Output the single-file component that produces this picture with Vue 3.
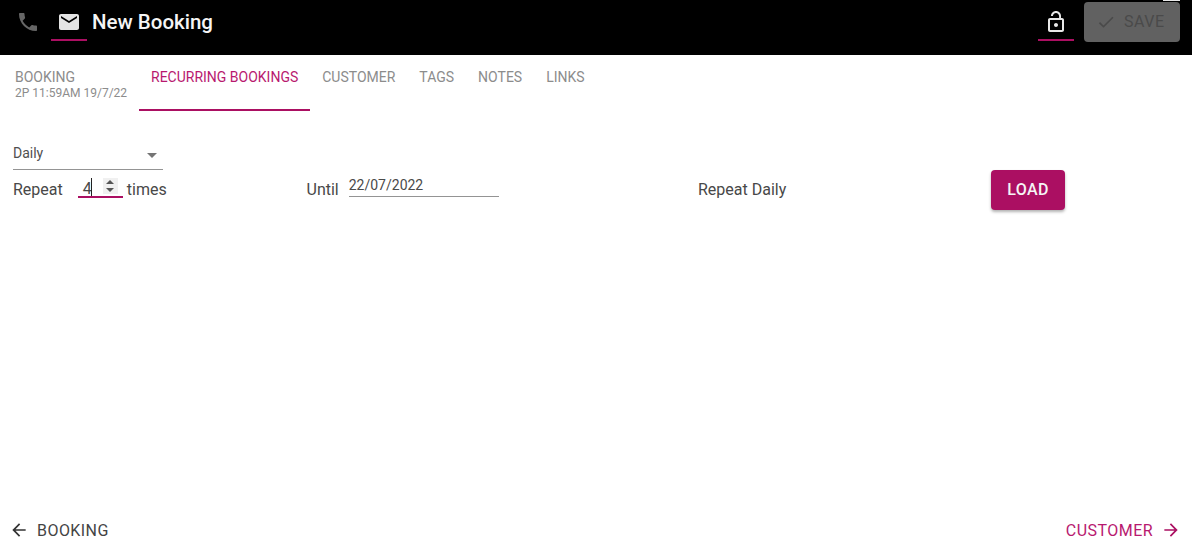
<template>
  <div class="page">
    <header class="bar">
      <div class="bar-icon phone">
        <svg width="24" height="24" viewBox="0 0 24 24"><path fill="#666" d="M6.62 10.79c1.44 2.83 3.76 5.14 6.59 6.59l2.2-2.2c.27-.27.67-.36 1.02-.24 1.12.37 2.33.57 3.57.57.55 0 1 .45 1 1V20c0 .55-.45 1-1 1-9.39 0-17-7.61-17-17 0-.55.45-1 1-1h3.5c.55 0 1 .45 1 1 0 1.25.2 2.45.57 3.57.11.35.03.74-.25 1.02l-2.2 2.2z"/></svg>
      </div>
      <div class="bar-icon mail">
        <svg width="24" height="24" viewBox="0 0 24 24"><path fill="#e4e4e4" d="M20 4H4c-1.1 0-1.99.9-1.99 2L2 18c0 1.1.9 2 2 2h16c1.1 0 2-.9 2-2V6c0-1.1-.9-2-2-2zm0 4l-8 5-8-5V6l8 5 8-5v2z"/></svg>
        <span class="underline"></span>
      </div>
      <h1 class="title">New Booking</h1>
      <div class="spacer"></div>
      <div class="bar-icon lock">
        <svg width="24" height="24" viewBox="0 0 24 24"><path fill="#e8e8e8" d="M12 17c1.1 0 2-.9 2-2s-.9-2-2-2-2 .9-2 2 .9 2 2 2zm6-9h-1V6c0-2.76-2.24-5-5-5S7 3.24 7 6h1.9c0-1.71 1.39-3.1 3.1-3.1 1.71 0 3.1 1.39 3.1 3.1v2H6c-1.1 0-2 .9-2 2v10c0 1.1.9 2 2 2h12c1.1 0 2-.9 2-2V10c0-1.1-.9-2-2-2zm0 12H6V10h12v10z"/></svg>
        <span class="underline"></span>
      </div>
      <button class="save" type="button">
        <svg width="20" height="20" viewBox="0 0 24 24"><path fill="#4a4a4a" d="M9 16.17 4.83 12l-1.42 1.41L9 19 21 7l-1.41-1.41z"/></svg>
        <span>SAVE</span>
      </button>
      <i class="clip"></i>
    </header>

    <nav class="tabs">
      <div class="tab two-line">
        <span>BOOKING</span>
        <small>2P 11:59AM 19/7/22</small>
      </div>
      <div class="tab active"><span>RECURRING BOOKINGS</span></div>
      <div class="tab"><span>CUSTOMER</span></div>
      <div class="tab"><span>TAGS</span></div>
      <div class="tab"><span>NOTES</span></div>
      <div class="tab"><span>LINKS</span></div>
    </nav>

    <main class="content">
      <div class="select">
        <span>Daily</span>
        <i class="caret"></i>
      </div>
      <div class="row">
        <div class="repeat">
          <span>Repeat</span>
          <div class="number">
            <span class="digit">4</span>
            <i class="cursor"></i>
            <div class="spin">
              <i class="up"></i>
              <i class="down"></i>
            </div>
          </div>
          <span>times</span>
        </div>
        <div class="until">
          <span>Until</span>
          <div class="date">22/07/2022</div>
        </div>
        <div class="freq">Repeat Daily</div>
        <button class="load" type="button">LOAD</button>
      </div>
    </main>

    <footer class="foot">
      <div class="nav back">
        <svg width="20" height="20" viewBox="0 0 24 24"><path fill="#333" d="M20 11H7.83l5.59-5.59L12 4l-8 8 8 8 1.41-1.41L7.83 13H20v-2z"/></svg>
        <span>BOOKING</span>
      </div>
      <div class="nav next">
        <span>CUSTOMER</span>
        <svg width="20" height="20" viewBox="0 0 24 24"><path fill="#ab0f62" d="m12 4-1.41 1.41L16.17 11H4v2h12.17l-5.58 5.59L12 20l8-8z"/></svg>
      </div>
    </footer>
  </div>
</template>

<script setup>
</script>

<style>
html, body { margin: 0; background: #fff; }
</style>

<style scoped>
.page {
  width: 1192px;
  height: 556px;
  display: flex;
  flex-direction: column;
  overflow: hidden;
  font-family: Roboto, "Liberation Sans", sans-serif;
  color: #444;
}
.bar {
  position: relative;
  height: 55px;
  flex: none;
  background: #000;
  display: flex;
  align-items: flex-start;
  overflow: hidden;
}
.bar-icon {
  position: relative;
  width: 36px;
  height: 41px;
  display: flex;
  justify-content: center;
  padding-top: 10px;
  box-sizing: border-box;
}
.phone { margin-left: 10px; margin-right: 5px; }
.underline {
  position: absolute;
  left: 0;
  right: 0;
  bottom: 0;
  height: 2px;
  background: #ab0f62;
}
.title {
  margin: 9px 0 0 5px;
  font-size: 20.5px;
  line-height: 26px;
  font-weight: 500;
  color: #f5f5f5;
}
.spacer { flex: 1; }
.lock { margin-right: 10px; }
.save {
  width: 96px;
  height: 40px;
  margin: 2px 12px 0 0;
  padding: 0 0 2px 12px;
  border: 0;
  border-radius: 4px;
  background: #616161;
  color: #4a4a4a;
  font: 400 16px Roboto, sans-serif;
  letter-spacing: 0.5px;
  display: flex;
  align-items: center;
  gap: 8px;
}
.save svg { margin-top: 2px; }
.clip {
  position: absolute;
  top: 0;
  right: 12px;
  width: 17px;
  height: 1px;
  background: #e8e8e8;
}
.tabs {
  flex: none;
  height: 56px;
  display: flex;
  padding-left: 3px;
}
.tab {
  padding: 14px 12px 0;
  box-sizing: border-box;
  height: 56px;
  font-size: 14px;
  line-height: 15px;
  color: #8c8c8c;
  white-space: nowrap;
}
.tab > span { position: relative; top: 0.5px; }
.two-line {
  display: flex;
  flex-direction: column;
  width: 136px;
}
.two-line small {
  font-size: 12px;
  line-height: 15px;
  margin-top: 1.5px;
}
.active {
  color: #b8196f;
  border-bottom: 2px solid #ab0f62;
}
.content {
  flex: 1;
  padding: 31px 0 0 13px;
  min-height: 0;
}
.select {
  position: relative;
  width: 150px;
  height: 28px;
  box-sizing: border-box;
  border-bottom: 1px solid #949494;
  font-size: 14px;
  line-height: 16px;
  padding-top: 3px;
  color: #4f4f4f;
}
.caret {
  position: absolute;
  right: 6px;
  top: 11px;
  border-left: 5px solid transparent;
  border-right: 5px solid transparent;
  border-top: 5px solid #757575;
}
.row {
  display: flex;
  align-items: flex-start;
  height: 40px;
  font-size: 16px;
  line-height: 19px;
  color: #484848;
}
.repeat {
  width: 293.5px;
  display: flex;
  padding-top: 10px;
}
.number {
  position: relative;
  box-sizing: border-box;
  width: 45px;
  height: 18px;
  margin: 0 4px 0 15px;
  border-bottom: 2px solid #ab0f62;
}
.digit {
  position: absolute;
  left: 5px;
  top: -1px;
}
.cursor {
  position: absolute;
  left: 13px;
  top: -2px;
  width: 1px;
  height: 18px;
  background: #222;
}
.spin {
  position: absolute;
  left: 25px;
  top: -2px;
  width: 15px;
  height: 16px;
  background: #f0f0f0;
}
.up, .down {
  position: absolute;
  left: 3px;
  border-left: 4px solid transparent;
  border-right: 4px solid transparent;
}
.up { top: 2px; border-bottom: 4px solid #555; }
.down { top: 10px; border-top: 4px solid #555; }
.until {
  width: 391.5px;
  display: flex;
  padding-top: 10px;
}
.date {
  width: 150px;
  height: 18px;
  margin: -2px 0 0 10px;
  border-bottom: 1px solid #949494;
  font-size: 14px;
  line-height: 15px;
  color: #4a4a4a;
}
.freq {
  width: 293px;
  padding-top: 10px;
}
.load {
  width: 74px;
  height: 40px;
  border: 0;
  border-radius: 4px;
  background: #ab0f62;
  color: #f5f5f5;
  font: 500 16px Roboto, sans-serif;
  letter-spacing: 0.4px;
  box-shadow: 0 2px 3px rgba(0, 0, 0, 0.3);
  padding: 0 0 2px;
}
.foot {
  flex: none;
  height: 50px;
  display: flex;
  justify-content: space-between;
  align-items: flex-start;
  padding: 14px 11px 0 9px;
  box-sizing: border-box;
}
.nav {
  display: flex;
  align-items: center;
  font-size: 16px;
  line-height: 19px;
  letter-spacing: 0.45px;
}
.back { gap: 8px; color: #444; }
.next { gap: 8px; color: #b8196f; }
</style>
